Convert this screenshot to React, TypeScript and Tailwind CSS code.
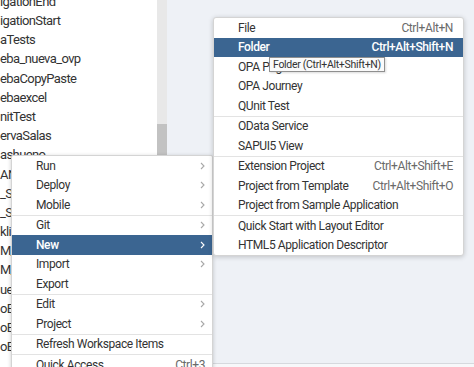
import React from 'react';

type Item = { label: string; shortcut?: string; sub?: boolean; active?: boolean; sep?: boolean };

const treeRows = [
  'igationEnd',
  'igationStart',
  'aTests',
  'eba_nueva_ovp',
  'ebaCopyPaste',
  'ebaexcel',
  'nitTest',
  'ervaSalas',
  'ashueno',
  'ANALISIS',
  '_SALES',
  '_SD_APP',
  'klist',
  'M_TEST',
  'M_APP',
  'ueba',
  'oBANK',
  'oBOOK',
  'oBILL',
];

const contextItems: Item[] = [
  { label: 'Run', sub: true },
  { label: 'Deploy', sub: true },
  { label: 'Mobile', sub: true, sep: true },
  { label: 'Git', sub: true },
  { label: 'New', sub: true, active: true },
  { label: 'Import', sub: true },
  { label: 'Export', sep: true },
  { label: 'Edit', sub: true },
  { label: 'Project', sub: true, sep: true },
  { label: 'Refresh Workspace Items', sep: true },
  { label: 'Quick Access', shortcut: 'Ctrl+3' },
];

const newItems: Item[] = [
  { label: 'File', shortcut: 'Ctrl+Alt+N' },
  { label: 'Folder', shortcut: 'Ctrl+Alt+Shift+N', active: true },
  { label: 'OPA Page' },
  { label: 'OPA Journey' },
  { label: 'QUnit Test', sep: true },
  { label: 'OData Service' },
  { label: 'SAPUI5 View', sep: true },
  { label: 'Extension Project', shortcut: 'Ctrl+Alt+Shift+E' },
  { label: 'Project from Template', shortcut: 'Ctrl+Alt+Shift+O' },
  { label: 'Project from Sample Application', sep: true },
  { label: 'Quick Start with Layout Editor' },
  { label: 'HTML5 Application Descriptor' },
];

const Chevron = ({ active }: { active?: boolean }) => (
  <svg width="5" height="8" viewBox="0 0 5 8" className={active ? 'text-white' : 'text-[#a8a8a8]'}>
    <path d="M1 1l3 3-3 3" fill="none" stroke="currentColor" strokeWidth="1.1" />
  </svg>
);

const MenuRows = ({ items, right }: { items: Item[]; right: string }) => (
  <>
    {items.map(item => (
      <div key={item.label}>
        <div
          className={`h-[19.5px] flex items-center pl-[24px] ${right} ${
            item.active ? 'bg-[#3b6591] text-white font-medium' : 'text-[#333333]'
          }`}
        >
          <span className="flex-1 whitespace-nowrap">{item.label}</span>
          {item.shortcut && (
            <span className={item.active ? 'text-white' : 'text-[#6a6a6a]'}>{item.shortcut}</span>
          )}
          {item.sub && <Chevron active={item.active} />}
        </div>
        {item.sep && <div className="h-px bg-[#e3e3e3]" />}
      </div>
    ))}
  </>
);

const App: React.FC = () => {
  return (
    <div
      className="relative w-[474px] h-[367px] overflow-hidden flex bg-[#eef1f6]"
      style={{ fontFamily: 'Roboto, "Liberation Sans", sans-serif' }}
    >
      {/* project tree */}
      <div className="w-[157px] bg-white overflow-hidden">
        <div className="mt-[-8px]">
          {treeRows.map(r => (
            <div key={r} className="h-[19.2px] flex items-center text-[13px] tracking-[-0.6px] text-[#333333] whitespace-nowrap">
              {r}
            </div>
          ))}
        </div>
      </div>
      <div className="w-[10px] bg-[#e8e8e8] flex flex-col">
        <div className="h-[124px]" />
        <div className="h-[50px] bg-[#c2c2c2]" />
      </div>

      {/* editor area */}
      <div className="flex-1 flex flex-col">
        <div className="flex-1" />
        <div className="h-[4px] border-t border-[#d6d9de] bg-[#f7f8fa]" />
      </div>

      {/* context menu */}
      <div className="absolute left-[11px] top-[155px] w-[202px] bg-white border border-[#d4d4d4] rounded-[2px] shadow-[0_1px_4px_rgba(0,0,0,0.2)] text-[12px] tracking-[-0.4px] pb-2">
        <MenuRows items={contextItems} right="pr-[7px]" />
      </div>

      {/* New submenu */}
      <div className="absolute left-[213px] top-[17px] w-[251px] bg-white border border-[#d4d4d4] rounded-[3px] shadow-[0_1px_5px_rgba(0,0,0,0.2)] text-[12px] tracking-[-0.4px]">
        <MenuRows items={newItems} right="pr-[10px]" />
      </div>

      {/* tooltip */}
      <div className="absolute left-[269px] top-[57px] h-[15px] px-[3px] flex items-center bg-[#fafafa] border border-[#8f8f8f] text-[10.5px] tracking-[-0.3px] text-[#333333] shadow-[1px_1px_2px_rgba(0,0,0,0.15)] whitespace-nowrap">
        Folder (Ctrl+Alt+Shift+N)
      </div>
    </div>
  );
};

export default App;
